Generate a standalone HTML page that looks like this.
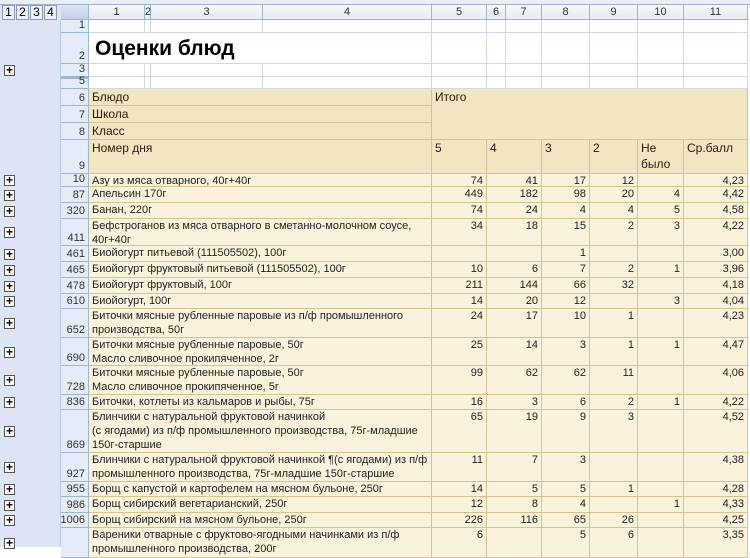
<!DOCTYPE html>
<html><head><meta charset="utf-8">
<style>
*{box-sizing:border-box;margin:0;padding:0}
body{width:750px;height:547px;overflow:hidden;background:#fff;font-family:"Liberation Sans",Arial,sans-serif;position:relative;color:#222}
.a{position:absolute}
.ol{left:0;top:20px;width:61px;height:527px;background:#dbe5f3;border-right:1px solid #b9c9dd}
.rh{position:absolute;left:61px;width:28px;background:#e4ecf7;border-bottom:1px solid #9eb6ce;border-right:1px solid #9eb6ce;font-size:11px;color:#333;text-align:right;padding-right:3px;display:flex;align-items:flex-end;justify-content:flex-end;line-height:14px}
.ch{position:absolute;top:5px;height:15px;background:linear-gradient(#f7f9fc,#e3e9f2);border-right:1px solid #9eb6ce;border-bottom:1px solid #9eb6ce;font-size:11px;color:#333;text-align:center;line-height:15px}
.c{position:absolute;border-right:1px solid #d5c48f;border-bottom:1px solid #d5c48f;font-size:11px;line-height:14px;padding:0 3px}
.d{background:#faf2dc}
.h{background:#f2e6c0;font-size:12px;line-height:16px;color:#2a1a10}
.w{position:absolute;border-right:1px solid #d0d7e5;border-bottom:1px solid #d0d7e5;background:#fff}
.n{text-align:right}
.p{position:absolute;left:4px;width:11px;height:11px;border:1px solid #555;background:#fff;font-size:12px;line-height:9px;text-align:center;font-weight:bold;color:#000}
.lb{position:absolute;top:5px;width:13px;height:15px;border:1px solid #8a9bb5;background:#eef2f8;font-size:12px;line-height:13px;text-align:center;color:#000}
</style></head><body>
<div class="a" style="left:0;top:0;width:750px;height:5px;background:#e8eef6;border-bottom:1px solid #9fb3cf"></div>
<div class="a" style="left:0;top:5px;width:61px;height:15px;background:#dbe5f3"></div>
<div class="lb" style="left:2px">1</div><div class="lb" style="left:16px">2</div><div class="lb" style="left:30px">3</div><div class="lb" style="left:44px">4</div>
<div class="a ol"></div>
<div class="a" style="left:61px;top:5px;width:28px;height:15px;background:linear-gradient(#dde6f2,#c2d1e6);border-right:1px solid #9eb6ce;border-bottom:1px solid #9eb6ce"></div>
<div class="ch" style="left:89px;width:56px">1</div>
<div class="ch" style="left:145px;width:6px">2</div>
<div class="ch" style="left:151px;width:112px">3</div>
<div class="ch" style="left:263px;width:169px">4</div>
<div class="ch" style="left:432px;width:55px">5</div>
<div class="ch" style="left:487px;width:19px">6</div>
<div class="ch" style="left:506px;width:36px">7</div>
<div class="ch" style="left:542px;width:48px">8</div>
<div class="ch" style="left:590px;width:48px">9</div>
<div class="ch" style="left:638px;width:46px">10</div>
<div class="ch" style="left:684px;width:64px">11</div>

<div class="rh" style="top:20px;height:13px">1</div>
<div class="rh" style="top:33px;height:31px">2</div>
<div class="rh" style="top:64px;height:13px">3</div>
<div class="rh" style="top:77px;height:12px;border-top:2px solid #9eb6ce">5</div>
<div class="p" style="top:65px">+</div>
<div class="w" style="left:89px;top:20px;width:56px;height:69px"></div>
<div class="w" style="left:145px;top:20px;width:6px;height:69px"></div>
<div class="w" style="left:151px;top:20px;width:112px;height:69px"></div>
<div class="w" style="left:263px;top:20px;width:169px;height:69px"></div>
<div class="w" style="left:432px;top:20px;width:55px;height:69px"></div>
<div class="w" style="left:487px;top:20px;width:19px;height:69px"></div>
<div class="w" style="left:506px;top:20px;width:36px;height:69px"></div>
<div class="w" style="left:542px;top:20px;width:48px;height:69px"></div>
<div class="w" style="left:590px;top:20px;width:48px;height:69px"></div>
<div class="w" style="left:638px;top:20px;width:46px;height:69px"></div>
<div class="w" style="left:684px;top:20px;width:64px;height:69px"></div>
<div class="a" style="left:89px;top:32px;width:659px;height:1px;background:#d0d7e5"></div>
<div class="a" style="left:89px;top:63px;width:659px;height:1px;background:#d0d7e5"></div>
<div class="a" style="left:89px;top:76px;width:659px;height:1px;background:#d0d7e5"></div>
<div class="a" style="left:89px;top:33px;width:342px;height:30px;background:#fff;font-size:21px;font-weight:bold;line-height:31px;padding-left:6px;color:#000">Оценки блюд</div>

<div class="rh" style="top:89px;height:17px">6</div>
<div class="rh" style="top:106px;height:17px">7</div>
<div class="rh" style="top:123px;height:17px">8</div>
<div class="rh" style="top:140px;height:34px">9</div>
<div class="c h" style="left:89px;top:89px;width:343px;height:17px">Блюдо</div>
<div class="c h" style="left:89px;top:106px;width:343px;height:17px">Школа</div>
<div class="c h" style="left:89px;top:123px;width:343px;height:17px">Класс</div>
<div class="c h" style="left:432px;top:89px;width:316px;height:51px">Итого</div>
<div class="c h" style="left:89px;top:140px;width:343px;height:34px">Номер дня</div>
<div class="c h" style="left:432px;top:140px;width:55px;height:34px">5</div>
<div class="c h" style="left:487px;top:140px;width:55px;height:34px">4</div>
<div class="c h" style="left:542px;top:140px;width:48px;height:34px">3</div>
<div class="c h" style="left:590px;top:140px;width:48px;height:34px">2</div>
<div class="c h" style="left:638px;top:140px;width:46px;height:34px">Не<br>было</div>
<div class="c h" style="left:684px;top:140px;width:64px;height:34px">Ср.балл</div>

<div id="rows"></div>
<script>
const R=[
[174,13,"10","Азу из мяса отварного, 40г+40г",["74","41","17","12","","4,23"]],
[187,16,"87","Апельсин 170г",["449","182","98","20","4","4,42"]],
[203,16,"320","Банан, 220г",["74","24","4","4","5","4,58"]],
[219,27,"411","Бефстроганов из мяса отварного в сметанно-молочном соусе,<br>40г+40г",["34","18","15","2","3","4,22"]],
[246,16,"461","Биойогурт питьевой (111505502), 100г",["","","1","","","3,00"]],
[262,16,"465","Биойогурт фруктовый питьевой (111505502), 100г",["10","6","7","2","1","3,96"]],
[278,16,"478","Биойогурт фруктовый, 100г",["211","144","66","32","","4,18"]],
[294,15,"610","Биойогурт, 100г",["14","20","12","","3","4,04"]],
[309,29,"652","Биточки мясные рубленные паровые из п/ф промышленного<br>производства, 50г",["24","17","10","1","","4,23"]],
[338,28,"690","Биточки мясные рубленные паровые, 50г<br>Масло сливочное прокипяченное, 2г",["25","14","3","1","1","4,47"]],
[366,29,"728","Биточки мясные рубленные паровые, 50г<br>Масло сливочное прокипяченное, 5г",["99","62","62","11","","4,06"]],
[395,15,"836","Биточки, котлеты из кальмаров и рыбы, 75г",["16","3","6","2","1","4,22"]],
[410,43,"869","Блинчики с натуральной фруктовой начинкой<br>(с ягодами) из п/ф промышленного производства, 75г-младшие<br>150г-старшие",["65","19","9","3","","4,52"]],
[453,29,"927","Блинчики с натуральной фруктовой начинкой ¶(с ягодами) из п/ф<br>промышленного производства, 75г-младшие 150г-старшие",["11","7","3","","","4,38"]],
[482,15,"955","Борщ с капустой и картофелем на мясном бульоне, 250г",["14","5","5","1","","4,28"]],
[497,16,"986","Борщ сибирский вегетарианский, 250г",["12","8","4","","1","4,33"]],
[513,15,"1006","Борщ сибирский на мясном бульоне, 250г",["226","116","65","26","","4,25"]],
[528,30,"","Вареники отварные с фруктово-ягодными начинками из п/ф<br>промышленного производства, 200г",["6","","5","6","","3,35"]]];
const X=[[432,55],[487,55],[542,48],[590,48],[638,46],[684,64]];
let h="";
for(const [t,ht,n,txt,v] of R){
h+=`<div class="rh" style="top:${t}px;height:${ht}px">${n}</div>`;
h+=`<div class="p" style="top:${t+Math.round((ht-11)/2)}px">+</div>`;
h+=`<div class="c d" style="left:89px;top:${t}px;width:343px;height:${ht}px;overflow:hidden;white-space:nowrap">${txt}</div>`;
v.forEach((s,i)=>{h+=`<div class="c d n" style="left:${X[i][0]}px;top:${t}px;width:${X[i][1]}px;height:${ht}px">${s}</div>`;});
}
document.getElementById("rows").innerHTML=h;
</script>
</body></html>
